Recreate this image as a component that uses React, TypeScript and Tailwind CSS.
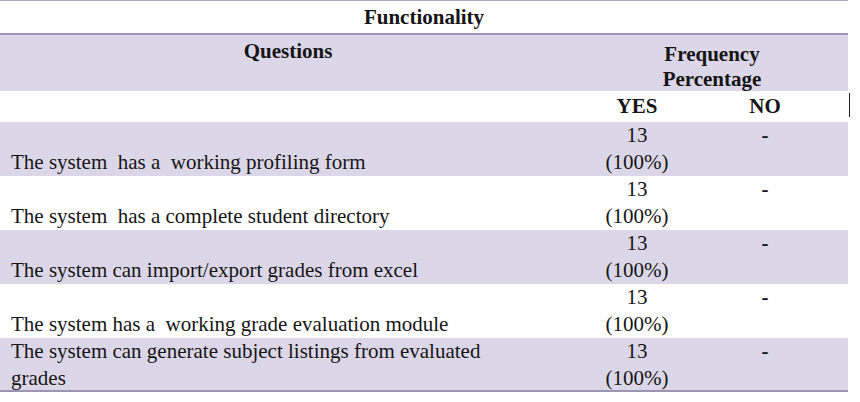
import React from 'react'

const rows = [
  { q: 'The system\u00a0 has a\u00a0 working profiling form', shade: true },
  { q: 'The system\u00a0 has a complete student directory', shade: false },
  { q: 'The system can import/export grades from excel', shade: true },
  { q: 'The system has a\u00a0 working grade evaluation module', shade: false },
  { q: 'The system can generate subject listings from evaluated grades', shade: true, top: true },
]

function App() {
  return (
    <div className="w-[860px] h-[402px] bg-white text-[#151515] text-[21px] font-serif overflow-hidden">
      <div className="w-[848px] border-t border-[#b0a9c2] [font-family:'Liberation_Serif',Cambria,serif]">
        <div className="h-[34px] flex items-center justify-center font-bold border-b-2 border-[#9c95b0] leading-[27px]">
          Functionality
        </div>

        <div className="h-[56px] bg-[#dcd7e8] grid grid-cols-[576px_1fr] font-bold">
          <div className="text-center pt-[3px] leading-[27px]">Questions</div>
          <div className="text-center pt-[7px] leading-[25px]">
            <div>Frequency</div>
            <div>Percentage</div>
          </div>
        </div>

        <div className="h-[31px] flex items-center font-bold w-[850px]">
          <div className="w-[576px]" />
          <div className="w-[122px] text-center">YES</div>
          <div className="w-[134px] text-center">NO</div>
          <div className="flex-1" />
          <div className="w-px h-[24px] bg-[#222] mb-[4px]" />
        </div>

        {rows.map((r, i) => (
          <div
            key={i}
            className={`h-[54px] grid grid-cols-[576px_122px_134px_1fr] leading-[27px] ${r.shade ? 'bg-[#dcd7e8]' : 'bg-white'} ${i === rows.length - 1 ? 'border-b-2 border-[#9c95b0]' : ''}`}
          >
            <div className={`pl-[11px] pr-[40px] flex ${r.top ? 'items-start' : 'items-end'}`}>
              <span>{r.q}</span>
            </div>
            <div className="text-center">
              <div>13</div>
              <div>(100%)</div>
            </div>
            <div className="text-center font-bold">-</div>
            <div />
          </div>
        ))}
      </div>
    </div>
  )
}

export default App
